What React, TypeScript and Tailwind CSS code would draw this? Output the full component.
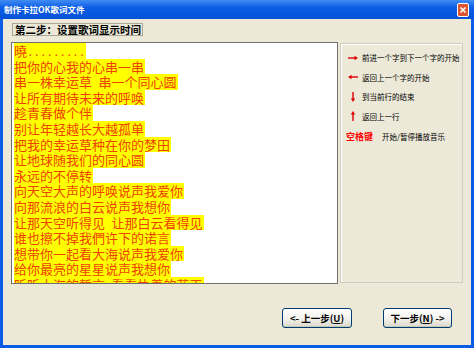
const lyrics = [
  "把你的心我的心串一串",
  "串一株幸运草|串一个同心圆",
  "让所有期待未来的呼唤",
  "趁青春做个伴",
  "别让年轻越长大越孤单",
  "把我的幸运草种在你的梦田",
  "让地球随我们的同心圆",
  "永远的不停转",
  "向天空大声的呼唤说声我爱你",
  "向那流浪的白云说声我想你",
  "让那天空听得见|让那白云看得见",
  "谁也擦不掉我們许下的诺言",
  "想带你一起看大海说声我爱你",
  "给你最亮的星星说声我想你",
  "听听大海的誓言|看看执着的蓝天",
];

function Arrow({ dir }: { dir: "right" | "left" | "down" | "up" }) {
  const rot = { right: 0, left: 180, down: 90, up: -90 }[dir];
  return (
    <svg width="12" height="12" viewBox="0 0 12 12" style={{ transform: `rotate(${rot}deg)` }}>
      <path d="M1 6H8.5" stroke="#e00000" strokeWidth="1.4" />
      <path d="M7.5 3.8L11 6L7.5 8.2Z" fill="#e00000" />
    </svg>
  );
}

function HelpRow({ icon, text }: { icon: React.ReactNode; text: string }) {
  return (
    <div className="flex h-[19.5px] items-center">
      <div className="flex w-[12px] justify-center">{icon}</div>
      <span className="ml-[3px] text-[7.5px] text-black">{text}</span>
    </div>
  );
}

function XpButton({ children }: { children: React.ReactNode }) {
  return (
    <button className="flex h-[20px] w-full items-center justify-center rounded-[3px] border border-[#003c74] bg-gradient-to-b from-white via-[#f4f3ee] to-[#dcd9cc] text-[9.5px] font-bold text-black shadow-[inset_0_-1px_0_#c9c6b6]">
      {children}
    </button>
  );
}

export default function App() {
  return (
    <div className="flex h-[348px] w-[474px] flex-col bg-[#0b5ce6] font-['Noto_Sans_CJK_SC',sans-serif]">
      {/* title bar */}
      <div className="flex h-[19px] items-center bg-gradient-to-b from-[#3f8cf3] via-[#0a5de6] via-40% to-[#0552d8] pl-[4px] pr-[5px]">
        <span className="text-[8.5px] font-bold text-white">制作卡拉OK歌词文件</span>
        <div className="ml-auto flex h-[14px] w-[12px] items-center justify-center rounded-[2px] border border-white bg-[#dd5530]">
          <svg width="8" height="8" viewBox="0 0 8 8">
            <path d="M1.5 1.5L6.5 6.5M6.5 1.5L1.5 6.5" stroke="#fff" strokeWidth="1.6" />
          </svg>
        </div>
      </div>

      {/* body */}
      <div className="mx-[3px] mb-[3px] flex flex-1 flex-col bg-[#ece9d8] pl-[8px]">
        <div className="ml-[1px] mt-[4px] flex h-[13px] w-[131px] items-center border border-[#aaa798] pl-[2px] text-[10.5px] font-bold text-black">
          第二步：设置歌词显示时间
        </div>

        <div className="mt-[6px] flex">
          <div className="h-[242px] w-[327px] overflow-hidden border border-[#707070] bg-white pl-[2px] text-[13px] text-[#ee4200]">
            <div className="h-[15.6px] w-fit bg-[#ffff00] pr-[1px] leading-[15.6px]">
              曉<span className="font-['Liberation_Mono',monospace] text-[10.8px]">.........</span>
            </div>
            {lyrics.map((l, i) => {
              const parts = l.split("|");
              return (
                <div key={i} className="h-[15.6px] w-fit whitespace-nowrap bg-[#ffff00] pr-[1px] leading-[15.6px]">
                  {parts[0]}
                  {parts[1] !== undefined && (
                    <>
                      <span className="inline-block w-[6.5px]" />
                      {parts[1]}
                    </>
                  )}
                </div>
              );
            })}
          </div>

          <div className="ml-[2px] mt-[1px] flex h-[240px] w-[123px] flex-col border border-[#d0cdbe] pl-[6px] pt-[4px] shadow-[inset_1px_1px_0_#ffffff]">
            <HelpRow icon={<Arrow dir="right" />} text="前进一个字到下一个字的开始" />
            <HelpRow icon={<Arrow dir="left" />} text="返回上一个字的开始" />
            <HelpRow icon={<Arrow dir="down" />} text="到当前行的结束" />
            <HelpRow icon={<Arrow dir="up" />} text="返回上一行" />
            <div className="flex h-[21px] items-center">
              <span className="-ml-[1px] text-[9px] font-bold text-[#ff0000]">空格键</span>
              <span className="ml-[9px] text-[7.5px] text-black">开始/暂停播放音乐</span>
            </div>
          </div>
        </div>

        <div className="mt-[24px] flex justify-end gap-[31px] pr-[19px]">
          <div className="w-[70px]">
            <XpButton>
              &lt;- 上一步(<span className="underline">U</span>)
            </XpButton>
          </div>
          <div className="w-[69px]">
            <XpButton>
              下一步(<span className="underline">N</span>) -&gt;
            </XpButton>
          </div>
        </div>
      </div>
    </div>
  );
}
